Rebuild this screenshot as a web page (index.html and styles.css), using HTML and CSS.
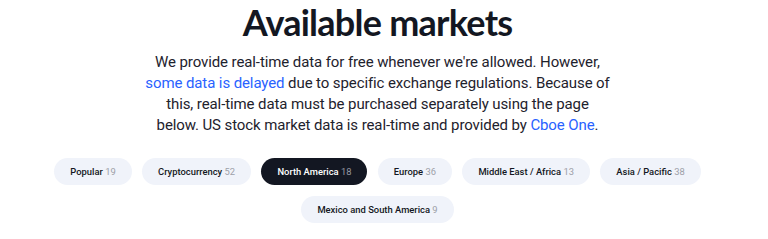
FILE: index.html
```html
<!DOCTYPE html>
<html lang="en">
<head>
<meta charset="utf-8">
<title>Available markets</title>
<link rel="stylesheet" href="styles.css">
</head>
<body>
<main class="page">
  <section class="markets">
    <h1 class="title">Available markets</h1>
    <p class="intro">We provide real-time data for free whenever we're allowed. However, <a class="link" href="#">some data is delayed</a> due to specific exchange regulations. Because of this, real-time data must be purchased separately using the page below. US stock market data is real-time and provided by <a class="link" href="#">Cboe One</a>.</p>
    <div class="tabs">
      <button class="tab">Popular <span class="count">19</span></button>
      <button class="tab">Cryptocurrency <span class="count">52</span></button>
      <button class="tab tab-active">North America <span class="count">18</span></button>
      <button class="tab">Europe <span class="count">36</span></button>
      <button class="tab">Middle East / Africa <span class="count">13</span></button>
      <button class="tab">Asia / Pacific <span class="count">38</span></button>
      <button class="tab">Mexico and South America <span class="count">9</span></button>
    </div>
  </section>
</main>
</body>
</html>
```
FILE: styles.css
```css
html, body {
  margin: 0;
  padding: 0;
  background: #ffffff;
}
.page {
  width: 755px;
}
.markets {
  display: flex;
  flex-direction: column;
  align-items: center;
  color: #131722;
}
.title {
  margin: 0;
  font-family: Lato, "Liberation Sans", sans-serif;
  font-weight: 700;
  font-size: 36px;
  line-height: 44px;
  letter-spacing: -0.75px;
  color: #131722;
}
.intro {
  margin: 8px 0 0;
  width: 468px;
  text-align: center;
  font-family: Roboto, "Liberation Sans", sans-serif;
  font-size: 15px;
  line-height: 21px;
  letter-spacing: -0.1px;
  color: #1e222d;
}
.link {
  color: #2962ff;
  text-decoration: none;
}
.tabs {
  margin-top: 22px;
  width: 680px;
  display: flex;
  flex-wrap: wrap;
  justify-content: center;
  gap: 11px 10.4px;
}
.tab {
  height: 27px;
  padding: 0 16px;
  border: 0;
  border-radius: 14px;
  background: #f0f3fa;
  font-family: Roboto, "Liberation Sans", sans-serif;
  font-weight: 500;
  font-size: 9.4px;
  color: #131722;
  cursor: pointer;
}
.count {
  font-weight: 400;
  color: #9da0a8;
}
.tab-active {
  background: #131722;
  color: #ffffff;
}
.tab-active .count {
  color: #9598a1;
}
```
